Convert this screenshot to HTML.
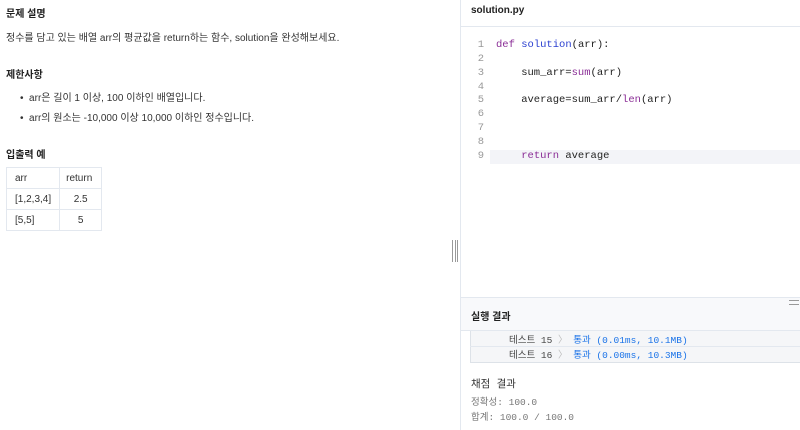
<!DOCTYPE html>
<html><head><meta charset="utf-8"><style>
*{margin:0;padding:0;box-sizing:border-box}
body{width:800px;height:430px;overflow:hidden;background:#fff;font-family:"Liberation Sans","Noto Sans CJK KR",sans-serif;color:#263747;position:relative}
.a{position:absolute;white-space:nowrap}
.h{font-size:10px;font-weight:bold;color:#222}
.t{font-size:10px;color:#333}
.mono{font-family:"Liberation Mono","Noto Sans CJK KR",monospace}
table{border-collapse:collapse;font-size:10px;color:#333}
td{border:1px solid #e3e8ef;height:21px;padding:0 8px}
.ln{position:absolute;left:470px;width:14px;text-align:right;font-size:10.5px;color:#999;font-family:"Liberation Mono",monospace}
.cd{position:absolute;left:496px;font-size:10.5px;color:#222;font-family:"Liberation Mono",monospace;white-space:pre}
.k{color:#8a2d96}.f{color:#2a3fd0}
</style></head><body>
<div class="a h" style="left:6px;top:5px">문제 설명</div>
<div class="a t" style="left:6px;top:29px">정수를 담고 있는 배열 arr의 평균값을 return하는 함수, solution을 완성해보세요.</div>
<div class="a h" style="left:6px;top:66px">제한사항</div>
<div class="a t" style="left:20px;top:89px">•&nbsp; arr은 길이 1 이상, 100 이하인 배열입니다.</div>
<div class="a t" style="left:20px;top:109px">•&nbsp; arr의 원소는 -10,000 이상 10,000 이하인 정수입니다.</div>
<div class="a h" style="left:6px;top:146px">입출력 예</div>
<table class="a" style="left:6px;top:167px">
<tr><td style="width:52px">arr</td><td style="width:42px;padding:0 6px">return</td></tr>
<tr><td>[1,2,3,4]</td><td style="text-align:center">2.5</td></tr>
<tr><td>[5,5]</td><td style="text-align:center">5</td></tr>
</table>
<div class="a" style="left:452px;top:240px;width:6px;height:22px;border-left:1px solid #999;border-right:1px solid #999"><div style="margin-left:1.5px;width:1px;height:22px;background:#999"></div></div>
<div class="a" style="left:460px;top:0;width:1px;height:430px;background:#e3e8ef"></div>
<div class="a h" style="left:471px;top:5px">solution.py</div>
<div class="a" style="left:461px;top:26px;width:339px;height:1px;background:#e3e8ef"></div>
<div class="a" style="left:490px;top:150px;width:310px;height:14px;background:#f3f4f8"></div>
<div class="ln" style="top:39px">1</div><div class="ln" style="top:53px">2</div><div class="ln" style="top:67px">3</div><div class="ln" style="top:81px">4</div><div class="ln" style="top:94px">5</div><div class="ln" style="top:108px">6</div><div class="ln" style="top:122px">7</div><div class="ln" style="top:136px">8</div><div class="ln" style="top:150px">9</div>
<div class="cd" style="top:39px"><span class="k">def</span> <span class="f">solution</span>(arr):</div>
<div class="cd" style="top:67px">    sum_arr=<span class="k">sum</span>(arr)</div>
<div class="cd" style="top:94px">    average=sum_arr/<span class="k">len</span>(arr)</div>
<div class="cd" style="top:150px">    <span class="k">return</span> average</div>
<div class="a" style="left:461px;top:297px;width:339px;height:34px;background:#f8f9fb;border-top:1px solid #e3e8ef;border-bottom:1px solid #e3e8ef"></div>
<div class="a" style="left:789px;top:300px;width:10px;height:5px;border-top:1px solid #999;border-bottom:1px solid #999"></div>
<div class="a h" style="left:471px;top:308px">실행 결과</div>
<div class="a" style="left:470px;top:331px;width:330px;height:32px;background:#f5f6f8;border-left:1px solid #dde2e8;border-bottom:1px solid #dde2e8"></div>
<div class="a" style="left:470px;top:346px;width:330px;height:1px;background:#e3e8ef"></div>
<div class="a mono" style="left:509px;top:332px;font-size:9.5px;color:#444">테스트 15 <span style="color:#bbb">〉</span> <span style="color:#1a73e8">통과 (0.01ms, 10.1MB)</span></div>
<div class="a mono" style="left:509px;top:347px;font-size:9.5px;color:#444">테스트 16 <span style="color:#bbb">〉</span> <span style="color:#1a73e8">통과 (0.00ms, 10.3MB)</span></div>
<div class="a mono" style="left:471px;top:376px;font-size:10.5px;color:#333">채점 결과</div>
<div class="a mono" style="left:471px;top:394px;font-size:9.5px;color:#777">정확성: 100.0</div>
<div class="a mono" style="left:471px;top:409px;font-size:9.5px;color:#777">합계: 100.0 / 100.0</div>
</body></html>
